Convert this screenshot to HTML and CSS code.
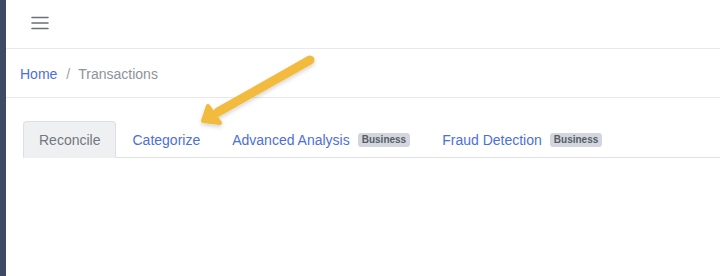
FILE: index.html
```html
<!DOCTYPE html>
<html>
<head>
<meta charset="utf-8">
<link rel="stylesheet" href="styles.css">
</head>
<body>
<div class="app">
  <div class="rail"></div>
  <div class="main">
    <header class="topbar">
      <svg class="burger" width="18" height="14" viewBox="0 0 18 14">
        <path d="M1 1.5H17M1 7H17M1 12.5H17" stroke="#6b6f76" stroke-width="1.6" stroke-linecap="round"/>
      </svg>
    </header>
    <nav class="crumbs">
      <a class="crumb-link">Home</a>
      <span class="sep">/</span>
      <span class="crumb-current">Transactions</span>
    </nav>
    <div class="tabs">
      <div class="tab active">Reconcile</div>
      <div class="tab">Categorize</div>
      <div class="tab">Advanced Analysis<span class="badge">Business</span></div>
      <div class="tab">Fraud Detection<span class="badge">Business</span></div>
    </div>
  </div>
  <svg class="arrow" width="720" height="276" viewBox="0 0 720 276">
    <defs>
      <filter id="sh" x="-20%" y="-20%" width="140%" height="140%">
        <feDropShadow dx="0" dy="2" stdDeviation="2" flood-color="#000" flood-opacity="0.18"/>
      </filter>
    </defs>
    <g filter="url(#sh)">
      <path d="M310 60 L218 112" stroke="#f2bb3d" stroke-width="9" stroke-linecap="round"/>
      <path d="M208 106 L203 121 L220 123 Z" fill="#f2bb3d" stroke="#f2bb3d" stroke-width="4" stroke-linejoin="round"/>
    </g>
  </svg>
</div>
</body>
</html>
```
FILE: styles.css
```css
* { box-sizing: border-box; }
html, body { margin: 0; padding: 0; background: #fff; }
body { font-family: "Liberation Sans", Arial, sans-serif; }
.app { position: relative; width: 720px; height: 276px; display: flex; overflow: hidden; }
.rail { width: 6px; background: #3e4a63; flex: none; }
.main { flex: 1; display: flex; flex-direction: column; }
.topbar { height: 49px; border-bottom: 1px solid #e8e9eb; display: flex; align-items: flex-start; padding: 16px 0 0 25px; }
.burger { display: block; }
.crumbs { height: 49px; border-bottom: 1px solid #e8e9eb; display: flex; align-items: center; padding: 2px 0 0 14px; font-size: 14px; }
.crumb-link { color: #4d6fd9; }
.sep { color: #9aa0a8; margin: 0 8px 0 9px; }
.crumb-current { color: #8d939b; }
.tabs { margin: 23px 0 0 17px; display: flex; align-items: stretch; border-bottom: 1px solid #dee1e5; height: 37px; }
.tab { display: flex; align-items: center; padding: 0 15px; font-size: 14px; color: #4d6fd9; margin-bottom: -1px; border: 1px solid transparent; border-radius: 4px 4px 0 0; }
.tab.active { background: #eef0f2; color: #737880; border-color: #dcdfe3; border-bottom-color: #eef0f2; }
.badge { display: inline-block; margin-left: 8px; background: #d3d7dd; color: #565d68; font-size: 10px; font-weight: bold; padding: 2px 4px; border-radius: 3px; line-height: 10px; }
.arrow { position: absolute; left: 0; top: 0; pointer-events: none; }
```
